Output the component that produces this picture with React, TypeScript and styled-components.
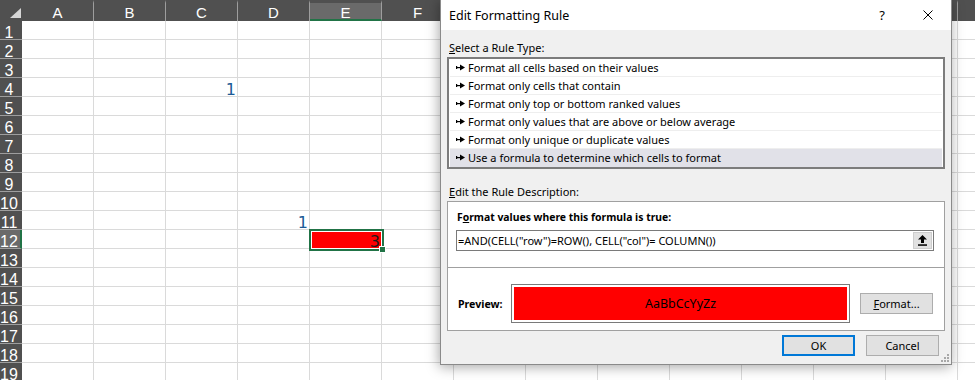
import React from 'react';
import styled, { createGlobalStyle } from 'styled-components';

const GlobalStyle = createGlobalStyle`
  html, body {
    margin: 0;
    padding: 0;
    background: #ffffff;
    overflow: hidden;
  }
`;

const COLS = ['A', 'B', 'C', 'D', 'E', 'F', 'G', 'H', 'I', 'J', 'K', 'L', 'M', 'N'];
const ROW_COUNT = 19;
const ACTIVE_COL = 'E';
const ACTIVE_ROW = 12;

type CellValue = { text: string; tone: 'blue' | 'dark'; fill?: string };

const values: Record<string, CellValue> = {
  C4: { text: '1', tone: 'blue' },
  D11: { text: '1', tone: 'blue' },
  E12: { text: '3', tone: 'dark', fill: '#ff0000' },
};

const ruleTypes = [
  'Format all cells based on their values',
  'Format only cells that contain',
  'Format only top or bottom ranked values',
  'Format only values that are above or below average',
  'Format only unique or duplicate values',
  'Use a formula to determine which cells to format',
];

const Screen = styled.div`
  position: relative;
  width: 975px;
  height: 380px;
  overflow: hidden;
  background: #ffffff;
`;

const Sheet = styled.div`
  display: grid;
  grid-template-columns: 22px repeat(14, 72px);
  grid-template-rows: 21px repeat(19, 19px);
  font-family: 'Liberation Sans', Arial, sans-serif;
`;

const Corner = styled.div`
  background: #505050;
  display: flex;
  align-items: flex-end;
  justify-content: flex-end;
  padding: 0 1px 3px 0;
`;

const ColHeader = styled.div<{ $active?: boolean }>`
  box-sizing: border-box;
  background: ${(p) => (p.$active ? '#6a6a6a' : '#505050')};
  border-top: 3px solid #505050;
  border-right: 1px solid #9e9e9e;
  border-bottom: ${(p) => (p.$active ? '2px solid #217346' : '0')};
  color: #ffffff;
  font-size: 15px;
  line-height: 20px;
  text-align: center;
  white-space: nowrap;
`;

const RowHeader = styled.div<{ $active?: boolean }>`
  box-sizing: border-box;
  background: ${(p) => (p.$active ? '#6a6a6a' : '#505050')};
  border-bottom: 1px solid #9e9e9e;
  border-right: ${(p) => (p.$active ? '2px solid #217346' : '0')};
  color: #ffffff;
  font-size: 16px;
  line-height: 23px;
  padding-right: 4px;
  text-align: center;
  white-space: nowrap;
  overflow: hidden;
`;

const Cell = styled.div<{ $fill?: string; $tone?: 'blue' | 'dark' }>`
  position: relative;
  box-sizing: border-box;
  border-right: 1px solid #dadada;
  border-bottom: 1px solid #dadada;
  background: ${(p) => p.$fill ?? '#ffffff'};
  color: ${(p) => (p.$tone === 'blue' ? '#1d5a96' : '#1a1a1a')};
  font-family: 'DejaVu Sans', sans-serif;
  font-size: 16px;
  line-height: 23px;
  text-align: right;
  padding-right: 1px;
  white-space: nowrap;
`;

const Selection = styled.div`
  position: absolute;
  left: -1px;
  top: -1px;
  width: 75px;
  height: 22px;
  box-sizing: border-box;
  border: 2px solid #217346;
  box-shadow: inset 0 0 0 1px #ffffff;
  z-index: 2;
`;

const FillHandle = styled.span`
  position: absolute;
  right: -4px;
  bottom: -4px;
  width: 5px;
  height: 5px;
  background: #217346;
  border: 1px solid #ffffff;
`;

/* dialog */

const Dialog = styled.div`
  position: absolute;
  left: 440px;
  top: -1px;
  width: 512px;
  height: 366px;
  box-sizing: border-box;
  border: 1px solid #8a8a8a;
  background: #f0f0f0;
  box-shadow: -1px 2px 12px rgba(0, 0, 0, 0.35);
  display: flex;
  flex-direction: column;
  font-family: 'Noto Sans', 'Open Sans', sans-serif;
  color: #000000;
  z-index: 5;
`;

const TitleBar = styled.div`
  height: 30px;
  flex: none;
  background: #ffffff;
  display: flex;
  align-items: center;
`;

const Title = styled.div`
  flex: 1;
  padding-left: 8px;
  font-size: 12.5px;
`;

const TitleButton = styled.div`
  width: 46px;
  height: 30px;
  display: flex;
  align-items: center;
  justify-content: center;
  font-size: 13px;
`;

const Body = styled.div`
  flex: 1;
  display: flex;
  flex-direction: column;
  padding: 10px 6px 0;
  position: relative;
`;

const SectionLabel = styled.div<{ $gap?: number }>`
  font-size: 11px;
  line-height: 16px;
  padding-left: 2px;
  margin-top: ${(p) => p.$gap ?? 0}px;
  margin-bottom: 1px;
`;

const Key = styled.span`
  text-decoration: underline;
  text-underline-offset: 1px;
`;

const RuleList = styled.div`
  height: 112px;
  box-sizing: border-box;
  border: 2px solid #7c7c7c;
  background: #ffffff;
  padding: 0 1px;
`;

const RuleItem = styled.div<{ $selected?: boolean }>`
  height: 18px;
  box-sizing: border-box;
  display: flex;
  align-items: center;
  gap: 3px;
  padding-left: 6px;
  font-size: 11px;
  background: ${(p) => (p.$selected ? '#e1e1e8' : '#ffffff')};
  border-bottom: 1px solid ${(p) => (p.$selected ? '#e1e1e8' : '#eeeeee')};
  white-space: nowrap;
`;

const DescBox = styled.div`
  border: 1px solid #a0a0a0;
  background: #ffffff;
`;

const DescTop = styled.div`
  padding: 7px 10px 16px 8px;
`;

const StrongLabel = styled.div`
  font-size: 10.4px;
  font-weight: 700;
  line-height: 16px;
  padding-left: 1px;
`;

const FormulaInput = styled.div`
  margin-top: 5px;
  height: 21px;
  box-sizing: border-box;
  border: 1px solid #7a7a7a;
  display: flex;
  align-items: center;
`;

const FormulaText = styled.div`
  flex: 1;
  padding-left: 1px;
  font-size: 11px;
  white-space: nowrap;
`;

const CollapseButton = styled.div`
  width: 19px;
  height: 17px;
  margin-right: 1px;
  box-sizing: border-box;
  background: #e1e1e1;
  border: 1px solid #cdcdcd;
  display: flex;
  align-items: center;
  justify-content: center;
`;

const PreviewRow = styled.div`
  border-top: 1px solid #a0a0a0;
  padding: 16px 0 7px 10px;
  display: flex;
  align-items: center;
`;

const PreviewLabel = styled.div`
  width: 53px;
  font-size: 10.6px;
  font-weight: 700;
`;

const PreviewBox = styled.div`
  width: 339px;
  height: 39px;
  box-sizing: border-box;
  border: 1px solid #7a7a7a;
  padding: 2px;
  background: #ffffff;
`;

const PreviewFill = styled.div`
  height: 100%;
  background: #ff0000;
  display: flex;
  align-items: center;
  justify-content: center;
  font-size: 12.5px;
`;

const DialogButton = styled.div<{ $primary?: boolean }>`
  width: 73px;
  height: 21px;
  box-sizing: border-box;
  background: #e1e1e1;
  border: ${(p) => (p.$primary ? '2px solid #0078d7' : '1px solid #adadad')};
  display: flex;
  align-items: center;
  justify-content: center;
  font-size: 11px;
  margin-left: 10px;
`;

const Footer = styled.div`
  display: flex;
  justify-content: flex-end;
  gap: 1px;
  margin-top: 4px;
  padding-right: 6px;
`;

const Grip = styled.svg`
  position: absolute;
  right: 2px;
  bottom: 2px;
`;

const CornerMark = () => (
  <svg width="11" height="10" viewBox="0 0 11 10">
    <polygon points="11,0 11,10 0,10" fill="#d6d6d6" />
  </svg>
);

const RuleArrow = () => (
  <svg width="9" height="7" viewBox="0 0 9 7">
    <rect x="0" y="2" width="1.2" height="3" fill="#000" />
    <rect x="0" y="3" width="5" height="1.2" fill="#000" />
    <polygon points="4,0.6 9,3.6 4,6.6" fill="#000" />
  </svg>
);

const UploadIcon = () => (
  <svg width="9" height="11" viewBox="0 0 9 11">
    <polygon points="4.5,0 9,4.5 6,4.5 6,8 3,8 3,4.5 0,4.5" fill="#000" />
    <rect x="0" y="9.3" width="9" height="1.5" fill="#000" />
  </svg>
);

const CloseIcon = () => (
  <svg width="10" height="10" viewBox="0 0 10 10">
    <path d="M0.5 0.5 L9.5 9.5 M9.5 0.5 L0.5 9.5" stroke="#000" strokeWidth="1" />
  </svg>
);

const GripDots = () => (
  <Grip width="8" height="8" viewBox="0 0 8 8">
    {[
      [6, 0],
      [3, 3],
      [6, 3],
      [0, 6],
      [3, 6],
      [6, 6],
    ].map(([x, y]) => (
      <rect key={`${x}-${y}`} x={x} y={y} width="2" height="2" fill="#a8a8a8" />
    ))}
  </Grip>
);

const Spreadsheet = () => {
  const rows = Array.from({ length: ROW_COUNT }, (_, i) => i + 1);
  return (
    <Sheet>
      <Corner>
        <CornerMark />
      </Corner>
      {COLS.map((c) => (
        <ColHeader key={c} $active={c === ACTIVE_COL}>
          {c}
        </ColHeader>
      ))}
      {rows.map((r) => (
        <React.Fragment key={r}>
          <RowHeader $active={r === ACTIVE_ROW}>{r}</RowHeader>
          {COLS.map((c) => {
            const v = values[`${c}${r}`];
            const active = c === ACTIVE_COL && r === ACTIVE_ROW;
            return (
              <Cell key={c} $fill={v?.fill} $tone={v?.tone}>
                {v?.text}
                {active && (
                  <Selection>
                    <FillHandle />
                  </Selection>
                )}
              </Cell>
            );
          })}
        </React.Fragment>
      ))}
    </Sheet>
  );
};

const EditRuleDialog = () => (
  <Dialog>
    <TitleBar>
      <Title>Edit Formatting Rule</Title>
      <TitleButton>?</TitleButton>
      <TitleButton>
        <CloseIcon />
      </TitleButton>
    </TitleBar>
    <Body>
      <SectionLabel>
        <Key>S</Key>elect a Rule Type:
      </SectionLabel>
      <RuleList>
        {ruleTypes.map((t, i) => (
          <RuleItem key={t} $selected={i === ruleTypes.length - 1}>
            <RuleArrow />
            {t}
          </RuleItem>
        ))}
      </RuleList>
      <SectionLabel $gap={15}>
        <Key>E</Key>dit the Rule Description:
      </SectionLabel>
      <DescBox>
        <DescTop>
          <StrongLabel>
            F<Key>o</Key>rmat values where this formula is true:
          </StrongLabel>
          <FormulaInput>
            <FormulaText>=AND(CELL("row")=ROW(), CELL("col")= COLUMN())</FormulaText>
            <CollapseButton>
              <UploadIcon />
            </CollapseButton>
          </FormulaInput>
        </DescTop>
        <PreviewRow>
          <PreviewLabel>Preview:</PreviewLabel>
          <PreviewBox>
            <PreviewFill>AaBbCcYyZz</PreviewFill>
          </PreviewBox>
          <DialogButton>
            <Key>F</Key>ormat...
          </DialogButton>
        </PreviewRow>
      </DescBox>
      <Footer>
        <DialogButton $primary>OK</DialogButton>
        <DialogButton>Cancel</DialogButton>
      </Footer>
      <GripDots />
    </Body>
  </Dialog>
);

export default function App() {
  return (
    <Screen>
      <GlobalStyle />
      <Spreadsheet />
      <EditRuleDialog />
    </Screen>
  );
}
